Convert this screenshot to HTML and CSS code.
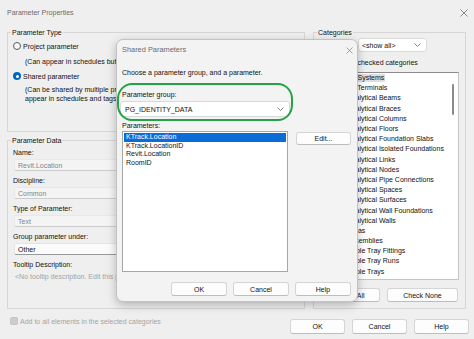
FILE: index.html
```html
<!DOCTYPE html>
<html lang="en">
<head>
    <meta charset="utf-8" />
    <title>Parameter Properties</title>
    <link rel="stylesheet" href="styles.css">
</head>
<body>

    <div class="window">
        <div class="titlebar">
            <span class="title">Parameter Properties</span>
            <svg class="close" width="8" height="8" viewBox="0 0 8 8"><path d="M0.5 0.5L7.5 7.5M7.5 0.5L0.5 7.5" stroke="#7a7a7a" stroke-width="0.9" fill="none" /></svg>
        </div>

        <div class="content">
            <div class="col-left">
                <fieldset class="group type-group">
                    <legend>Parameter Type</legend>
                    <div class="radio-row"><span class="radio"></span>Project parameter</div>
                    <p class="hint">(Can appear in schedules but not in tags)</p>
                    <div class="radio-row spaced"><span class="radio checked"></span>Shared parameter</div>
                    <p class="hint tight">(Can be shared by multiple projects and families, exported to ODBC, and<br>appear in schedules and tags)</p>
                </fieldset>

                <fieldset class="group data-group">
                    <legend>Parameter Data</legend>
                    <div class="field-label first">Name:</div>
                    <div class="field disabled">Revit.Location</div>
                    <div class="field-label">Discipline:</div>
                    <div class="field disabled">Common</div>
                    <div class="field-label">Type of Parameter:</div>
                    <div class="field disabled">Text</div>
                    <div class="field-label">Group parameter under:</div>
                    <div class="field">Other</div>
                    <div class="field-label">Tooltip Description:</div>
                    <div class="tooltip-text">&lt;No tooltip description. Edit this parameter to write a custom tooltip.&gt;</div>
                </fieldset>
            </div>

            <div class="col-right">
                <fieldset class="group cat-group">
                    <legend>Categories</legend>
                    <div class="filter-row">
                        <span class="filter-label">Filter list:</span>
                        <div class="select filter-select">
                            <span>&lt;show all&gt;</span>
                            <svg width="7" height="4" viewBox="0 0 7 4"><polyline points="0.5,0.5 3.5,3.5 6.5,0.5" fill="none" stroke="#666" stroke-width="0.8" /></svg>
                        </div>
                    </div>
                    <div class="check-row"><span class="checkbox"></span>Hide un-checked categories</div>
                    <div class="cat-list">
                        <ul class="cat-items">
                            <li><span class="expander"></span><span class="checkbox"></span><span class="cat-name focus">Air Systems</span></li>
                            <li><span class="expander"></span><span class="checkbox"></span><span class="cat-name">Air Terminals</span></li>
                            <li><span class="expander"></span><span class="checkbox"></span><span class="cat-name">Analytical Beams</span></li>
                            <li><span class="expander"></span><span class="checkbox"></span><span class="cat-name">Analytical Braces</span></li>
                            <li><span class="expander"></span><span class="checkbox"></span><span class="cat-name">Analytical Columns</span></li>
                            <li><span class="expander"></span><span class="checkbox"></span><span class="cat-name">Analytical Floors</span></li>
                            <li><span class="expander"></span><span class="checkbox"></span><span class="cat-name">Analytical Foundation Slabs</span></li>
                            <li><span class="expander"></span><span class="checkbox"></span><span class="cat-name">Analytical Isolated Foundations</span></li>
                            <li><span class="expander"></span><span class="checkbox"></span><span class="cat-name">Analytical Links</span></li>
                            <li><span class="expander"></span><span class="checkbox"></span><span class="cat-name">Analytical Nodes</span></li>
                            <li><span class="expander"></span><span class="checkbox"></span><span class="cat-name">Analytical Pipe Connections</span></li>
                            <li><span class="expander"></span><span class="checkbox"></span><span class="cat-name">Analytical Spaces</span></li>
                            <li><span class="expander"></span><span class="checkbox"></span><span class="cat-name">Analytical Surfaces</span></li>
                            <li><span class="expander"></span><span class="checkbox"></span><span class="cat-name">Analytical Wall Foundations</span></li>
                            <li><span class="expander"></span><span class="checkbox"></span><span class="cat-name">Analytical Walls</span></li>
                            <li><span class="expander"></span><span class="checkbox"></span><span class="cat-name">Areas</span></li>
                            <li><span class="expander"></span><span class="checkbox"></span><span class="cat-name">Assemblies</span></li>
                            <li><span class="expander"></span><span class="checkbox"></span><span class="cat-name">Cable Tray Fittings</span></li>
                            <li><span class="expander"></span><span class="checkbox"></span><span class="cat-name">Cable Tray Runs</span></li>
                            <li><span class="expander"></span><span class="checkbox"></span><span class="cat-name">Cable Trays</span></li>
                        </ul>
                        <div class="scrollbar"><div class="thumb"></div></div>
                    </div>
                    <div class="cat-buttons">
                        <button class="btn check-all">Check All</button>
                        <button class="btn check-none">Check None</button>
                    </div>
                </fieldset>
            </div>
        </div>

        <div class="footer">
            <div class="add-row"><span class="checkbox checked-disabled"></span>Add to all elements in the selected categories</div>
            <div class="footer-buttons">
                <button class="btn">OK</button>
                <button class="btn">Cancel</button>
                <button class="btn">Help</button>
            </div>
        </div>
    </div>

    <div class="modal">
        <div class="modal-title">
            <span>Shared Parameters</span>
            <svg class="modal-close" width="7" height="7" viewBox="0 0 7 7"><path d="M0.5 0.5L6.5 6.5M6.5 0.5L0.5 6.5" stroke="#8a8a8a" stroke-width="0.8" fill="none" /></svg>
        </div>
        <p class="instruction">Choose a parameter group, and a parameter.</p>
        <div class="modal-label">Parameter group:</div>
        <div class="select group-select">
            <span>PG_IDENTITY_DATA</span>
            <svg width="7" height="4" viewBox="0 0 7 4"><polyline points="0.5,0.5 3.5,3.5 6.5,0.5" fill="none" stroke="#666" stroke-width="0.8" /></svg>
        </div>
        <div class="modal-label params-label">Parameters:</div>
        <div class="params-row">
            <ul class="param-list">
                <li class="selected">KTrack.Location</li>
                <li>KTrack.LocationID</li>
                <li>Revit.Location</li>
                <li>RoomID</li>
            </ul>
            <button class="btn edit-btn">Edit...</button>
        </div>
        <div class="modal-buttons">
            <button class="btn">OK</button>
            <button class="btn">Cancel</button>
            <button class="btn">Help</button>
        </div>
    </div>

    <div class="highlight"></div>

</body>
</html>
```

FILE: styles.css
```css
* {
    font-family: "Liberation Sans", Arial, sans-serif;
}

body {
    margin: 0;
    background: #efefef;
    font-size: 7px;
    color: #111;
}

p {
    margin: 0;
}

ul {
    margin: 0;
    padding: 0;
    list-style: none;
}

.window {
    width: 474px;
    height: 339px;
    display: flex;
    flex-direction: column;
    background: #efefef;
    overflow: hidden;
}

.titlebar {
    height: 28px;
    box-sizing: border-box;
    padding: 8px 6px 0 7px;
    display: flex;
    justify-content: space-between;
    align-items: flex-start;
}

.title {
    color: #6a6a6a;
    line-height: 10px;
}

.close {
    margin-top: 1px;
}

.content {
    height: 281px;
    box-sizing: border-box;
    padding: 0 8px 0 7px;
    display: flex;
    gap: 8px;
}

.col-left {
    width: 298px;
    display: flex;
    flex-direction: column;
    gap: 4px;
}

.col-right {
    flex: 1;
    display: flex;
    min-width: 0;
}

/* group boxes */
.group {
    margin: 0;
    padding: 0 6px;
    border: 1px solid #d6d6d6;
    min-width: 0;
}

.group legend {
    padding: 0 1px;
    margin-left: -3px;
    line-height: 9px;
    color: #111;
}

.type-group {
    padding-top: 4.5px;
    padding-bottom: 28px;
}

.radio-row {
    display: flex;
    align-items: center;
    line-height: 9px;
}

.radio-row.spaced {
    margin-top: 6px;
}

.radio {
    width: 8px;
    height: 8px;
    box-sizing: border-box;
    border-radius: 50%;
    border: 1px solid #5c5c5c;
    background: #f6f6f6;
    margin: 0 2px 0 -1px;
    position: relative;
}

.radio.checked {
    border: none;
    background: #0067c0;
}

.radio.checked::after {
    content: "";
    position: absolute;
    left: 2.5px;
    top: 2.5px;
    width: 3px;
    height: 3px;
    border-radius: 50%;
    background: #fff;
}

.hint {
    padding-left: 11px;
    margin-top: 6px;
    line-height: 9px;
    white-space: nowrap;
}

.hint.tight {
    margin-top: 4px;
}

.data-group {
    flex: 1;
    padding-top: 3px;
}

.field-label {
    margin: 5px 0 0 -1px;
    line-height: 9px;
}

.field-label.first {
    margin-top: 0;
}

.field {
    margin-top: 2px;
    height: 12px;
    box-sizing: border-box;
    padding-left: 3px;
    line-height: 11px;
    background: #fbfbfb;
    border: 1px solid #e4e4e4;
    border-bottom-color: #9a9a9a;
    border-radius: 2px;
    color: #111;
}

.field.disabled {
    background: #f4f4f4;
    border-color: #e8e8e8;
    border-bottom-color: #cdcdcd;
    color: #858585;
}

.tooltip-text {
    margin-top: 3px;
    padding-left: 1px;
    line-height: 9px;
    color: #a2a2a2;
    white-space: nowrap;
}

/* categories */
.cat-group {
    flex: 1;
    padding-top: 1px;
    display: flex;
    flex-direction: column;
}

.filter-row {
    display: flex;
    align-items: center;
}

.filter-label {
    width: 38px;
}

.select {
    box-sizing: border-box;
    background: #fff;
    border: 1px solid #d9d9d9;
    border-radius: 3px;
    display: flex;
    justify-content: space-between;
    align-items: center;
}

.filter-select {
    width: 69px;
    height: 14px;
    padding: 0 5px 0 3px;
}

.check-row {
    margin-top: 5.5px;
    line-height: 9px;
    display: flex;
    align-items: center;
}

.checkbox {
    width: 8px;
    height: 8px;
    box-sizing: border-box;
    border: 1px solid #5c5c5c;
    border-radius: 2px;
    background: #fafafa;
    margin-right: 3px;
}

.cat-list {
    margin-top: 5.5px;
    height: 208px;
    box-sizing: border-box;
    background: #fff;
    border: 1px solid #c4c4c4;
    border-top-color: #8c8c8c;
    display: flex;
}

.cat-items {
    flex: 1;
    overflow: hidden;
}

.cat-items li {
    height: 10.2px;
    line-height: 10.2px;
    display: flex;
    align-items: center;
    white-space: nowrap;
}

.expander {
    width: 12px;
}

.cat-items .checkbox {
    margin: 0 4px 0 1px;
}

.cat-name {
    padding: 0 1px;
    line-height: 8px;
}

.cat-name.focus {
    background: #dedede;
}

.scrollbar {
    width: 10px;
    display: flex;
    justify-content: center;
}

.thumb {
    margin-top: 11px;
    width: 2px;
    height: 31px;
    border-radius: 1px;
    background: #8a8a8a;
}

.cat-buttons {
    margin-top: 8px;
    padding-right: 1px;
    display: flex;
    justify-content: flex-end;
    gap: 7px;
}

.btn {
    height: 14px;
    box-sizing: border-box;
    padding: 0;
    font-size: 7px;
    color: #111;
    background: #fdfdfd;
    border: 1px solid #d5d5d5;
    border-bottom-color: #bdbdbd;
    border-radius: 3px;
}

.check-all {
    width: 60px;
}

.check-none {
    width: 71px;
}

/* footer */
.footer {
    flex: 1;
    display: flex;
    align-items: flex-start;
    padding: 0 5px 0 10px;
}

.add-row {
    margin-top: 7.5px;
    line-height: 9px;
    display: flex;
    align-items: center;
    color: #a3a3a3;
}

.checkbox.checked-disabled {
    border-color: #c6c6c6;
    background: #cdcdcd;
    margin-right: 2px;
}

.footer-buttons {
    margin: 10px 0 0 auto;
    display: flex;
    gap: 7px;
}

.footer-buttons .btn {
    width: 55px;
    height: 15px;
}

/* shared parameters dialog */
.modal {
    position: absolute;
    left: 116px;
    top: 39px;
    width: 242px;
    height: 263px;
    box-sizing: border-box;
    padding: 5px 6px 0 5px;
    background: #f3f3f3;
    border: 1px solid #c2c2c2;
    border-radius: 7px;
    box-shadow: 0 3px 10px rgba(0, 0, 0, 0.25);
}

.modal-title {
    height: 10px;
    line-height: 10px;
    font-size: 7.4px;
    color: #6a6a6a;
    display: flex;
    justify-content: space-between;
    align-items: center;
}

.modal-close {
    margin-right: -2px;
}

.instruction {
    margin-top: 12.5px;
    line-height: 9px;
}

.modal-label {
    margin-top: 13.5px;
    line-height: 9px;
}

.group-select {
    margin: 2px 0 0 -2px;
    width: 170px;
    height: 16px;
    padding: 0 5px 0 4px;
}

.modal-label.params-label {
    margin-top: 3.5px;
}

.params-row {
    margin-top: 1.5px;
    display: grid;
    grid-template-columns: 166px 55px;
    gap: 8px;
    align-items: start;
}

.param-list {
    height: 141px;
    box-sizing: border-box;
    padding: 1px 1px 0;
    background: #fff;
    border: 1px solid #a6a6a6;
}

.param-list li {
    line-height: 8.5px;
    padding-left: 2px;
}

.param-list li.selected {
    background: #0a6cd6;
    color: #fff;
}

.edit-btn {
    margin-top: 1px;
    height: 13px;
}

.modal-buttons {
    margin-top: 10px;
    display: flex;
    justify-content: flex-end;
    gap: 6px;
}

.modal-buttons .btn {
    width: 56px;
}

/* annotation drawn over the screenshot */
.highlight {
    position: absolute;
    left: 117px;
    top: 83px;
    width: 176px;
    height: 38px;
    box-sizing: border-box;
    border: 2px solid #23a348;
    border-radius: 15px / 16px;
}
```
